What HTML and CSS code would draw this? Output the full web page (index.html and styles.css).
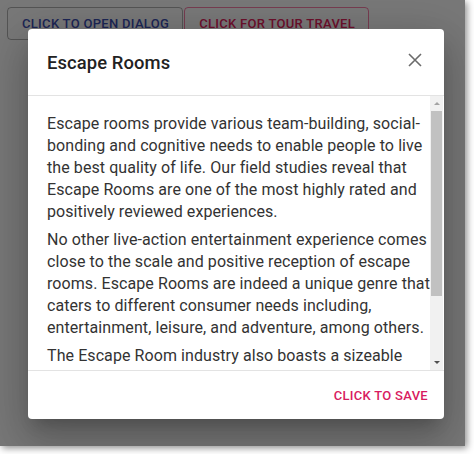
FILE: index.html
```html
<!DOCTYPE html>
<html lang="en">
<head>
<meta charset="utf-8">
<title>Escape Rooms</title>
<link rel="stylesheet" href="styles.css">
</head>
<body>
<div class="screen">
  <div class="toolbar">
    <button class="btn btn-primary">Click to open dialog</button>
    <button class="btn btn-secondary">Click for tour travel</button>
  </div>
  <div class="overlay">
    <div class="dialog">
      <div class="dialog-header">
        <h2 class="dialog-title">Escape Rooms</h2>
        <button class="close-btn" aria-label="close">
          <svg width="14" height="14" viewBox="0 0 14 14"><path d="M1 1 L13 13 M13 1 L1 13" stroke="#6b6b6b" stroke-width="1.6" fill="none"/></svg>
        </button>
      </div>
      <div class="dialog-content">
        <div class="text-col">
          <p>Escape rooms provide various team-building, social-bonding and cognitive needs to enable people to live the best quality of life. Our field studies reveal that Escape Rooms are one of the most highly rated and positively reviewed experiences.</p>
          <p>No other live-action entertainment experience comes close to the scale and positive reception of escape rooms. Escape Rooms are indeed a unique genre that caters to different consumer needs including, entertainment, leisure, and adventure, among others.</p>
          <p>The Escape Room industry also boasts a sizeable following among people of all ages and backgrounds.</p>
        </div>
        <div class="scrollbar">
          <div class="sb-arrow sb-up"></div>
          <div class="sb-thumb"></div>
          <div class="sb-rest"></div>
          <div class="sb-arrow sb-down"></div>
        </div>
      </div>
      <div class="dialog-footer">
        <button class="save-btn">Click to save</button>
      </div>
    </div>
  </div>
</div>
</body>
</html>
```

FILE: styles.css
```css
html, body {
  margin: 0;
  padding: 0;
  background: #ffffff;
}

body {
  font-family: Roboto, "Liberation Sans", sans-serif;
  width: 474px;
  height: 454px;
  overflow: hidden;
}

.screen {
  position: relative;
  width: 465px;
  height: 446px;
  background: #ffffff;
  box-shadow: 2px 2px 7px rgba(0, 0, 0, 0.45);
  overflow: hidden;
}

.toolbar {
  display: flex;
  gap: 1px;
  padding: 7px 0 0 7px;
}

.btn {
  font-family: Roboto, "Liberation Sans", sans-serif;
  font-size: 13px;
  font-weight: 500;
  letter-spacing: 0.3px;
  text-transform: uppercase;
  white-space: nowrap;
  height: 33px;
  padding: 0 13px 0 14px;
  border-radius: 4px;
  background: transparent;
  cursor: pointer;
}

.btn-primary {
  color: #3f51b5;
  border: 1px solid rgba(0, 0, 0, 0.3);
}

.btn-secondary {
  color: #e8245f;
  border: 1px solid rgba(245, 0, 87, 0.5);
}

.overlay {
  position: absolute;
  inset: 0;
  background: rgba(0, 0, 0, 0.53);
  display: flex;
  align-items: flex-start;
  padding: 29px 0 0 28px;
}

.dialog {
  width: 416px;
  height: 390px;
  background: #ffffff;
  border-radius: 4px;
  display: flex;
  flex-direction: column;
  box-shadow: 0 11px 15px -7px rgba(0, 0, 0, 0.2), 0 24px 38px 3px rgba(0, 0, 0, 0.14), 0 9px 46px 8px rgba(0, 0, 0, 0.12);
}

.dialog-header {
  height: 66px;
  flex: none;
  display: flex;
  align-items: center;
  justify-content: space-between;
  padding: 0 20px 0 19px;
  border-bottom: 1px solid #e3e3e3;
}

.dialog-title {
  margin: 0;
  font-size: 18.4px;
  font-weight: 500;
  color: #222222;
  letter-spacing: 0.1px;
}

.close-btn {
  border: 0;
  background: transparent;
  padding: 0;
  width: 18px;
  height: 18px;
  display: flex;
  align-items: center;
  justify-content: center;
  margin-top: -5px;
}

.dialog-content {
  flex: 1;
  display: flex;
  min-height: 0;
  border-bottom: 1px solid #e3e3e3;
}

.text-col {
  flex: 1;
  overflow: hidden;
  padding: 17px 0 0 19px;
}

.text-col p {
  margin: 0 0 6px;
  font-size: 16px;
  line-height: 22px;
  letter-spacing: 0.08px;
  color: #333333;
}

.scrollbar {
  width: 13px;
  flex: none;
  background: #f1f1f1;
  display: flex;
  flex-direction: column;
  margin-right: 1px;
}

.sb-arrow {
  height: 15px;
  flex: none;
  display: flex;
  align-items: center;
  justify-content: center;
}

.sb-up::before {
  content: "";
  border-left: 3px solid transparent;
  border-right: 3px solid transparent;
  border-bottom: 3px solid #a3a3a3;
}

.sb-down::before {
  content: "";
  border-left: 3px solid transparent;
  border-right: 3px solid transparent;
  border-top: 3px solid #505050;
}

.sb-thumb {
  height: 185px;
  flex: none;
  margin: 0 1px;
  background: #c1c1c1;
}

.sb-rest {
  flex: 1;
}

.dialog-footer {
  height: 48px;
  flex: none;
  display: flex;
  align-items: center;
  justify-content: flex-end;
  padding-right: 12px;
}

.save-btn {
  font-family: Roboto, "Liberation Sans", sans-serif;
  font-size: 13px;
  font-weight: 500;
  letter-spacing: 0.3px;
  text-transform: uppercase;
  color: #d81b60;
  border: 0;
  background: transparent;
  padding: 6px 4px;
  cursor: pointer;
}
```
